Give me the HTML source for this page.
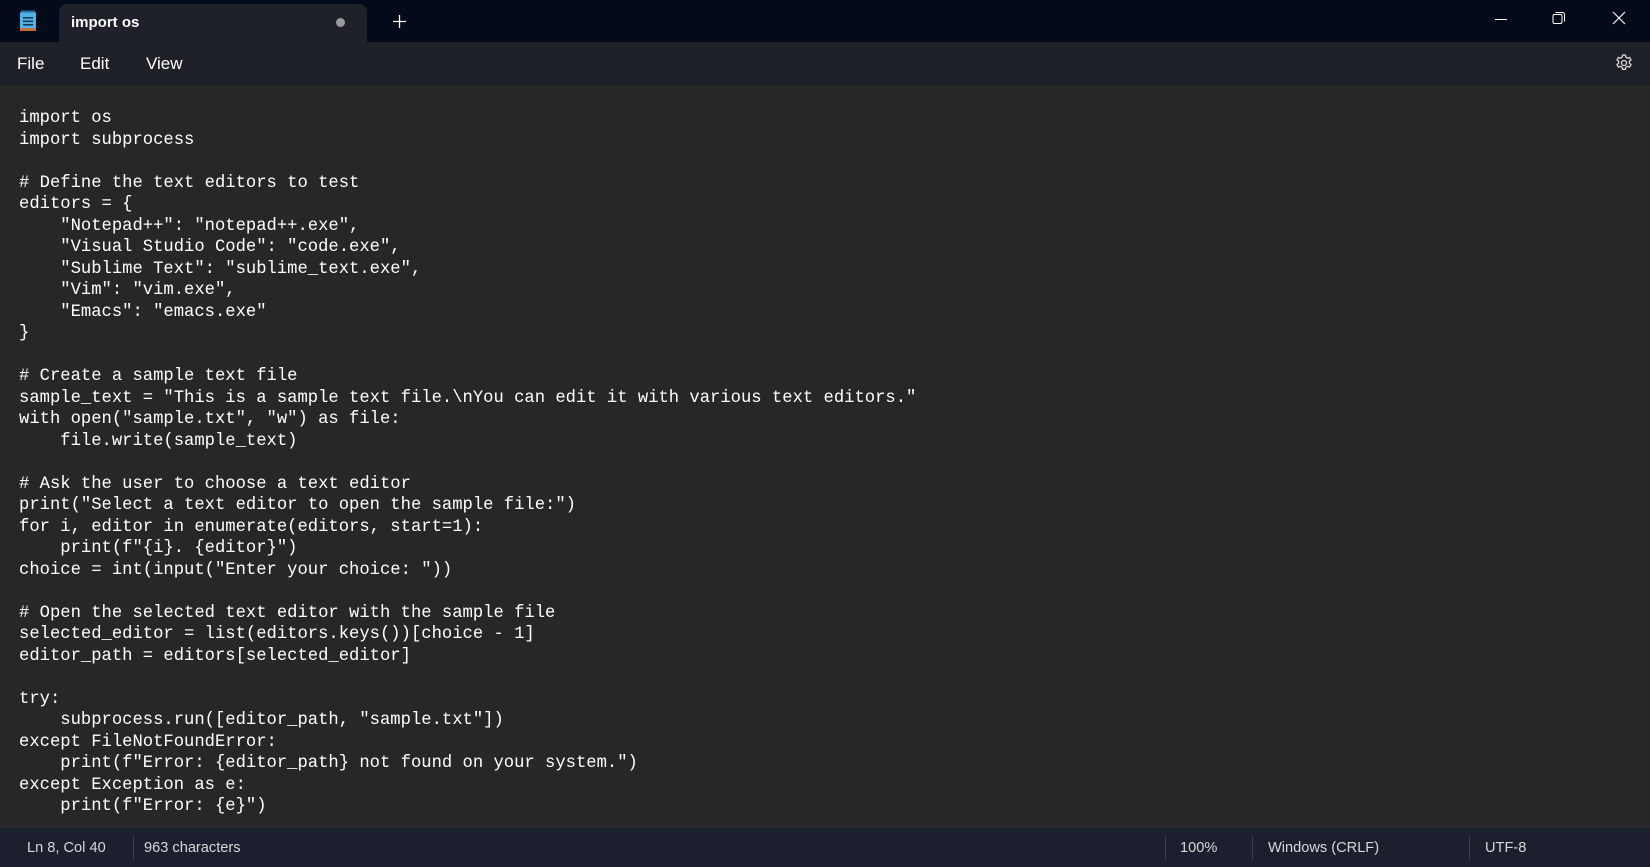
<!DOCTYPE html>
<html><head><meta charset="utf-8"><style>
*{margin:0;padding:0;box-sizing:border-box}
body{width:1650px;height:867px;overflow:hidden;background:#272727;font-family:"Liberation Sans",sans-serif;position:relative;color:#fff}
#title{position:absolute;left:0;top:0;width:1650px;height:42px;background:#030b1b}
#tab{position:absolute;left:59px;top:4px;width:308px;height:38px;background:#1e212a;border-radius:8px 8px 0 0}
#tab .t{position:absolute;left:12px;top:10px;font-size:15px;font-weight:bold;color:#fff}
#tab .dot{position:absolute;left:277px;top:14px;width:9px;height:9px;border-radius:50%;background:#9a9a9a}
#menu{position:absolute;left:0;top:42px;width:1650px;height:43px;background:#1f2128}
#menu span{position:absolute;top:12px;font-size:17px;color:#fff}
#code{position:absolute;left:19px;top:108px;font-family:"Liberation Mono",monospace;font-size:17.2px;line-height:21.5px;white-space:pre;color:#fff}
#status{position:absolute;left:0;top:828px;width:1650px;height:39px;background:#1b1f2e;font-size:14.6px;color:#d8d8d8}
#status span{position:absolute;top:12px}
#status i{position:absolute;top:8px;width:1px;height:24px;background:#3a3e4a}
</style></head><body>
<div id="title">
<svg style="position:absolute;left:19px;top:10px" width="18" height="22" viewBox="0 0 18 22"><rect x="1" y="2" width="16" height="19" rx="1.5" fill="#4fb3e8"/><rect x="1" y="18" width="16" height="3" fill="#c0703a"/><rect x="4" y="7" width="10" height="1.6" fill="#1a3b55"/><rect x="4" y="10.5" width="10" height="1.6" fill="#1a3b55"/><rect x="4" y="14" width="10" height="1.6" fill="#1a3b55"/><rect x="2" y="0.5" width="14" height="2" fill="#2a6d9a"/></svg>
<div id="tab"><span class="t">import os</span><div class="dot"></div></div>
<svg style="position:absolute;left:392px;top:14px" width="15" height="15" viewBox="0 0 15 15"><path d="M7.5 1v13M1 7.5h13" stroke="#fff" stroke-width="1.3"/></svg>
<svg style="position:absolute;left:1494px;top:12px" width="14" height="14"><path d="M1 7.5h12" stroke="#fff" stroke-width="1"/></svg>
<svg style="position:absolute;left:1552px;top:11px" width="14" height="14" viewBox="0 0 14 14"><rect x="1" y="3.5" width="9" height="9" rx="1.5" fill="none" stroke="#fff"/><path d="M3.5 1.5h7a2 2 0 0 1 2 2v7" fill="none" stroke="#fff"/></svg>
<svg style="position:absolute;left:1612px;top:11px" width="14" height="14"><path d="M1 1l12 12M13 1L1 13" stroke="#fff" stroke-width="1.1"/></svg>
</div>
<div id="menu"><span style="left:17px">File</span><span style="left:80px">Edit</span><span style="left:146px">View</span>
<svg style="position:absolute;left:1614px;top:11px" width="20" height="20" viewBox="0 0 24 24" fill="none" stroke="#ddd" stroke-width="1.5"><circle cx="12" cy="12" r="3"/><path d="M10.3 2.5h3.4l.6 2.7 1.8 1 2.6-.9 1.7 2.9-2 1.9v2l2 1.9-1.7 2.9-2.6-.9-1.8 1-.6 2.7h-3.4l-.6-2.7-1.8-1-2.6.9-1.7-2.9 2-1.9v-2l-2-1.9 1.7-2.9 2.6.9 1.8-1z"/></svg>
</div>
<div id="code">import os
import subprocess

# Define the text editors to test
editors = {
    "Notepad++": "notepad++.exe",
    "Visual Studio Code": "code.exe",
    "Sublime Text": "sublime_text.exe",
    "Vim": "vim.exe",
    "Emacs": "emacs.exe"
}

# Create a sample text file
sample_text = "This is a sample text file.\nYou can edit it with various text editors."
with open("sample.txt", "w") as file:
    file.write(sample_text)

# Ask the user to choose a text editor
print("Select a text editor to open the sample file:")
for i, editor in enumerate(editors, start=1):
    print(f"{i}. {editor}")
choice = int(input("Enter your choice: "))

# Open the selected text editor with the sample file
selected_editor = list(editors.keys())[choice - 1]
editor_path = editors[selected_editor]

try:
    subprocess.run([editor_path, "sample.txt"])
except FileNotFoundError:
    print(f"Error: {editor_path} not found on your system.")
except Exception as e:
    print(f"Error: {e}")</div>
<div id="status">
<span style="left:27px">Ln 8, Col 40</span><i style="left:133px"></i>
<span style="left:144px">963 characters</span>
<i style="left:1165px"></i><span style="left:1180px">100%</span>
<i style="left:1252px"></i><span style="left:1268px">Windows (CRLF)</span>
<i style="left:1469px"></i><span style="left:1485px">UTF-8</span>
</div>
</body></html>
